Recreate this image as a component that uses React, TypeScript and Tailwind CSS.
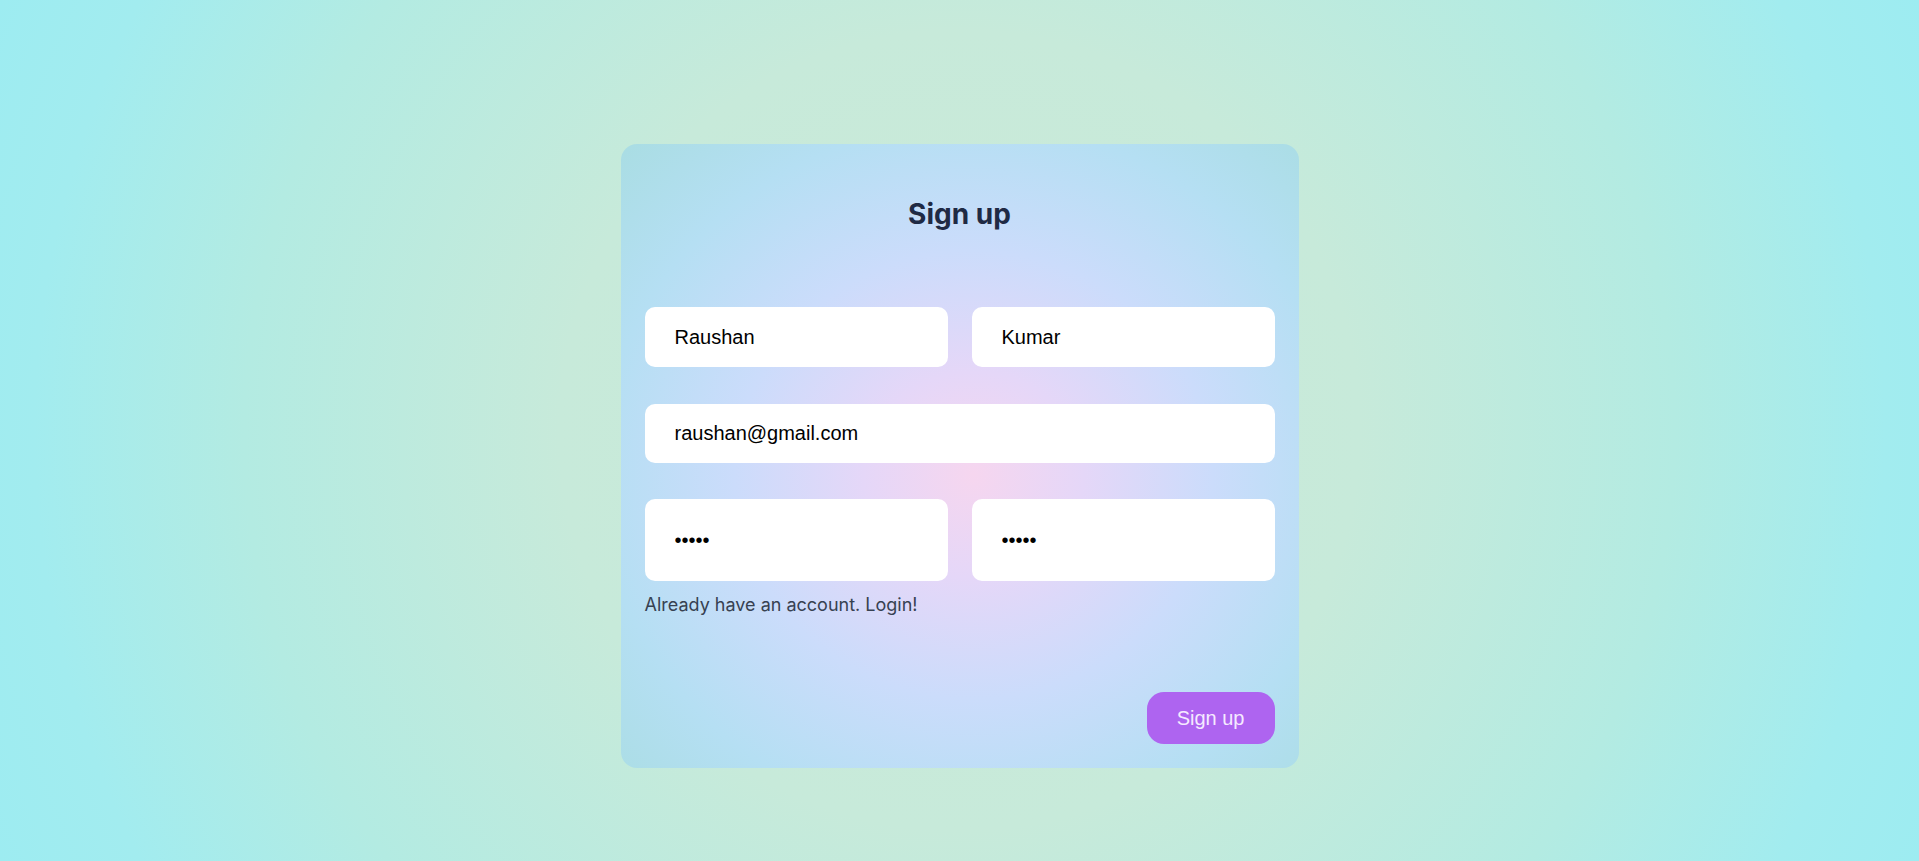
import React from "react";

const inputCls =
  "rounded-[10px] bg-white px-[30px] text-[20px] text-black outline-none font-['Liberation_Sans',Arial,sans-serif]";

export default function App() {
  return (
    <div className="w-full h-[861px] flex items-start justify-center bg-[radial-gradient(circle_at_center,#cce9d7_0%,#c7eada_38%,#b3ebe2_68%,#a2ecef_88%,#9decf1_100%)]">
      <div className="mt-[144px] w-[678px] h-[624px] rounded-2xl px-6 pb-6 flex flex-col bg-[radial-gradient(ellipse_at_52%_53%,#f6d6ef_0%,#e5d7f8_22%,#cbdcfb_48%,#b5dff3_75%,#a9dde3_100%)]">
        <h1 className="mt-[52px] text-center text-[28px] leading-9 font-bold text-[#1f2a44] font-['Inter','Noto_Sans',sans-serif]">
          Sign up
        </h1>
        <div className="mt-[75px] flex flex-col gap-[37px]">
          <div className="grid grid-cols-2 gap-6">
            <input readOnly value="Raushan" className={`h-[60px] ${inputCls}`} />
            <input readOnly value="Kumar" className={`h-[60px] ${inputCls}`} />
          </div>
          <input readOnly value="raushan@gmail.com" className={`h-[59px] ${inputCls}`} />
          <div className="grid grid-cols-2 gap-6 -mt-[1px]">
            <input readOnly type="password" value="12345" className={`h-[82px] ${inputCls}`} />
            <input readOnly type="password" value="12345" className={`h-[82px] ${inputCls}`} />
          </div>
        </div>
        <p className="mt-[10px] text-[18px] leading-7 text-[#374151] font-['Inter','Noto_Sans',sans-serif]">
          Already have an account. Login!
        </p>
        <div className="mt-auto flex justify-end">
          <button className="h-[52px] px-[30px] rounded-[17px] bg-[#ae64f0] text-[20px] text-[#f5eaff] font-['Liberation_Sans',Arial,sans-serif]">
            Sign up
          </button>
        </div>
      </div>
    </div>
  );
}
